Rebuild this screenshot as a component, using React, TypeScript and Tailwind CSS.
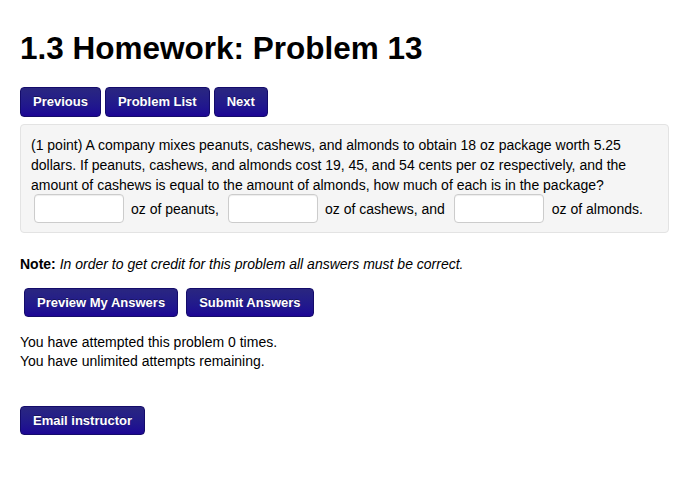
import React from "react";

const btn =
  "h-[30px] px-[12px] rounded-[4px] border border-[#140c6a] bg-gradient-to-b from-[#2a2680] to-[#1d0595] text-white text-[13px] font-bold [text-shadow:0_-1px_0_rgba(0,0,0,0.35)] flex items-center justify-center";

function Input() {
  return (
    <input
      type="text"
      className="w-[90px] h-[29px] bg-white border border-[#cccccc] rounded-[4px] shadow-[inset_0_1px_1px_rgba(0,0,0,0.075)]"
    />
  );
}

export default function App() {
  return (
    <div
      className="min-h-[482px] bg-white text-black px-[20px] pt-[31px]"
      style={{ fontFamily: '"Liberation Sans", Arial, Helvetica, sans-serif' }}
    >
      <h1 className="text-[31.5px] leading-[35px] font-bold">1.3 Homework: Problem 13</h1>

      <div className="flex gap-[4px] mt-[21px]">
        <button className={btn}>Previous</button>
        <button className={btn}>Problem List</button>
        <button className={btn}>Next</button>
      </div>

      <div className="mt-[7px] w-[649px] h-[109px] bg-[#f5f5f5] border border-[#e3e3e3] rounded-[4px] px-[10px] pt-[10px] text-[14px] leading-[20px]">
        <p>
          (1 point) A company mixes peanuts, cashews, and almonds to obtain 18 oz package worth 5.25
          dollars. If peanuts, cashews, and almonds cost 19, 45, and 54 cents per oz respectively, and the
          amount of cashews is equal to the amount of almonds, how much of each is in the package?
        </p>
        <div className="flex items-center mt-[-1px] h-[29px]">
          <div className="ml-[3px]">
            <Input />
          </div>
          <span className="ml-[7px] mr-[9px]">oz of peanuts,</span>
          <Input />
          <span className="ml-[7px] mr-[9px]">oz of cashews, and</span>
          <Input />
          <span className="ml-[8px]">oz of almonds.</span>
        </div>
      </div>

      <p className="mt-[21px] text-[14px] leading-[20px]">
        <b>Note:</b> <i>In order to get credit for this problem all answers must be correct.</i>
      </p>

      <div className="flex gap-[8px] mt-[14px] ml-[4px]">
        <button className={btn + " !h-[29px]"}>Preview My Answers</button>
        <button className={btn + " !h-[29px]"}>Submit Answers</button>
      </div>

      <div className="mt-[16px] text-[14px] leading-[19px]">
        <p>You have attempted this problem 0 times.</p>
        <p>You have unlimited attempts remaining.</p>
      </div>

      <div className="flex mt-[35px]">
        <button className={btn + " !h-[29px]"}>Email instructor</button>
      </div>
    </div>
  );
}
